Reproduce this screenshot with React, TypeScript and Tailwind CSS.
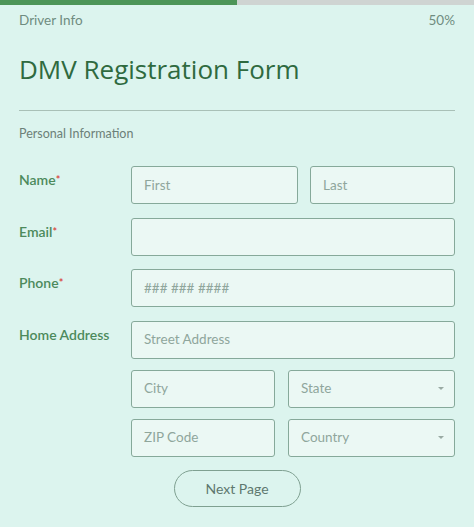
import React from "react";

const font = { fontFamily: "Lato, 'Noto Sans', sans-serif" };

function Field({ placeholder, className = "" }: { placeholder?: string; className?: string }) {
  return (
    <div
      className={`h-[38px] rounded-[3px] border border-[#86a99a] bg-[#ebf8f4] flex items-center px-3 text-[13.5px] text-[#8fa69c] ${className}`}
    >
      {placeholder}
    </div>
  );
}

function Select({ placeholder, className = "" }: { placeholder: string; className?: string }) {
  return (
    <div
      className={`h-[38px] rounded-[3px] border border-[#86a99a] bg-[#ebf8f4] flex items-center justify-between pl-3 pr-[9px] text-[13.5px] text-[#8fa69c] ${className}`}
    >
      <span>{placeholder}</span>
      <svg width="8" height="5" viewBox="0 0 8 5">
        <path d="M1 1 L4 4 L7 1 Z" fill="#9aaaa3" />
      </svg>
    </div>
  );
}

function Label({ text, required }: { text: string; required?: boolean }) {
  return (
    <div className="w-[112px] shrink-0 pt-[5px] text-[14px] font-semibold text-[#4c8a5c] leading-[18px]">
      {text}
      {required && <span className="text-[#d9413a] text-[11px] align-top">*</span>}
    </div>
  );
}

export default function App() {
  return (
    <div className="w-[474px] h-[527px] bg-[#dcf4ee] overflow-hidden" style={font}>
      <div className="flex h-[5px]">
        <div className="w-[237px] bg-[#4d9558]" />
        <div className="flex-1 bg-[#cfd4d2]" />
      </div>
      <div className="px-[19px]">
        <div className="flex justify-between pt-[7px] text-[13.5px] text-[#6f8c80] leading-[16px]">
          <span>Driver Info</span>
          <span>50%</span>
        </div>
        <h1
          className="mt-[25px] text-[26px] leading-[32px] text-[#2f6a3f]"
          style={{ fontFamily: "'Open Sans', sans-serif" }}
        >
          DMV Registration Form
        </h1>
        <div className="mt-[25px] h-px bg-[#a9c0b7]" />
        <div className="mt-[15px] text-[12.5px] leading-[16px] text-[#6c8078]">Personal Information</div>

        <div className="mt-[24px] flex flex-col gap-[13.5px]">
          <div className="flex">
            <Label text="Name" required />
            <div className="flex-1 flex gap-[12px]">
              <Field placeholder="First" className="w-[167px]" />
              <Field placeholder="Last" className="flex-1" />
            </div>
          </div>
          <div className="flex">
            <Label text="Email" required />
            <Field className="flex-1" />
          </div>
          <div className="flex">
            <Label text="Phone" required />
            <Field placeholder="### ### ####" className="flex-1" />
          </div>
          <div className="flex">
            <Label text="Home Address" />
            <div className="flex-1 flex flex-col gap-[11px]">
              <Field placeholder="Street Address" className="w-full" />
              <div className="flex gap-[13px]">
                <Field placeholder="City" className="w-[144px]" />
                <Select placeholder="State" className="flex-1" />
              </div>
              <div className="flex gap-[13px]">
                <Field placeholder="ZIP Code" className="w-[144px]" />
                <Select placeholder="Country" className="flex-1" />
              </div>
            </div>
          </div>
        </div>

        <div className="mt-[13px] flex justify-center">
          <div className="w-[127px] h-[37px] rounded-full border border-[#7fa091] flex items-center justify-center text-[14px] text-[#5e786e]">
            Next Page
          </div>
        </div>
      </div>
    </div>
  );
}
